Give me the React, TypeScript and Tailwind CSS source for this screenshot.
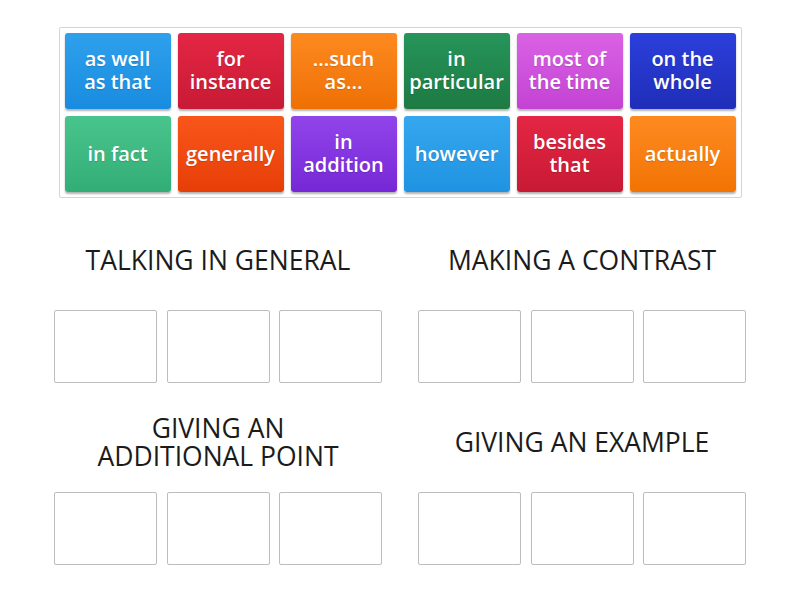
import React from 'react';

interface Tile {
  label: string;
  color: string;
}

const tiles: Tile[] = [
  { label: 'as well as that', color: 'bg-gradient-to-b from-[#2ea0ec] to-[#188ce0]' },
  { label: 'for instance', color: 'bg-gradient-to-b from-[#e42644] to-[#c81a34]' },
  { label: '...such as...', color: 'bg-gradient-to-b from-[#fd8a1f] to-[#ef7002]' },
  { label: 'in particular', color: 'bg-gradient-to-b from-[#26955a] to-[#1d7a42]' },
  { label: 'most of the time', color: 'bg-gradient-to-b from-[#da62e4] to-[#c342d3]' },
  { label: 'on the whole', color: 'bg-gradient-to-b from-[#2c3fdc] to-[#1f2db8]' },
  { label: 'in fact', color: 'bg-gradient-to-b from-[#48c58c] to-[#33ad76]' },
  { label: 'generally', color: 'bg-gradient-to-b from-[#f9561a] to-[#e63e06]' },
  { label: 'in addition', color: 'bg-gradient-to-b from-[#9144ea] to-[#7627d6]' },
  { label: 'however', color: 'bg-gradient-to-b from-[#35a7ee] to-[#1f93e2]' },
  { label: 'besides that', color: 'bg-gradient-to-b from-[#e42644] to-[#c81a34]' },
  { label: 'actually', color: 'bg-gradient-to-b from-[#fe8a1f] to-[#f27402]' },
];

// manual line breaks so the words wrap like the original
const lines: Record<string, string[]> = {
  'as well as that': ['as well', 'as that'],
  'for instance': ['for', 'instance'],
  '...such as...': ['...such', 'as...'],
  'in particular': ['in', 'particular'],
  'most of the time': ['most of', 'the time'],
  'on the whole': ['on the', 'whole'],
  'in addition': ['in', 'addition'],
  'besides that': ['besides', 'that'],
};

const groups = [
  ['TALKING IN GENERAL'],
  ['MAKING A CONTRAST'],
  ['GIVING AN', 'ADDITIONAL POINT'],
  ['GIVING AN EXAMPLE'],
];

const DropBox: React.FC = () => (
  <div className="w-[103px] h-[73px] border border-[#bdbdbd] rounded-[2px] bg-white" />
);

export default function App() {
  return (
    <div className="w-[800px] h-[600px] bg-white overflow-hidden pt-[27px] font-['Open_Sans',sans-serif]">
      <div className="mx-auto w-[683px] border border-[#d4d4d4] rounded-[2px] p-[5px]">
        <div className="grid grid-cols-6 gap-[7px]">
          {tiles.map(t => (
            <div
              key={t.label}
              className={`${t.color} h-[76px] pb-[2px] rounded-[3px] shadow-[0_2px_2px_rgba(0,0,0,0.3)] flex flex-col items-center justify-center text-white font-semibold text-[20px] leading-[23px] text-center [text-shadow:0_1px_1px_rgba(0,0,0,0.15)]`}
            >
              {(lines[t.label] || [t.label]).map(l => (
                <span key={l} className="block">{l}</span>
              ))}
            </div>
          ))}
        </div>
      </div>

      <div className="mt-[27px] mx-auto w-[692px] grid grid-cols-2 gap-x-[36px] gap-y-[24px]">
        {groups.map(g => (
          <div key={g.join(' ')} className="flex flex-col">
            <div className="h-[70px] flex flex-col items-center justify-center text-center text-[26.5px] leading-[28px] text-[#1b1b1b]">
              {g.map(l => (
                <span key={l}>{l}</span>
              ))}
            </div>
            <div className="mt-[15px] flex gap-[9.5px]">
              <DropBox />
              <DropBox />
              <DropBox />
            </div>
          </div>
        ))}
      </div>
    </div>
  );
}
